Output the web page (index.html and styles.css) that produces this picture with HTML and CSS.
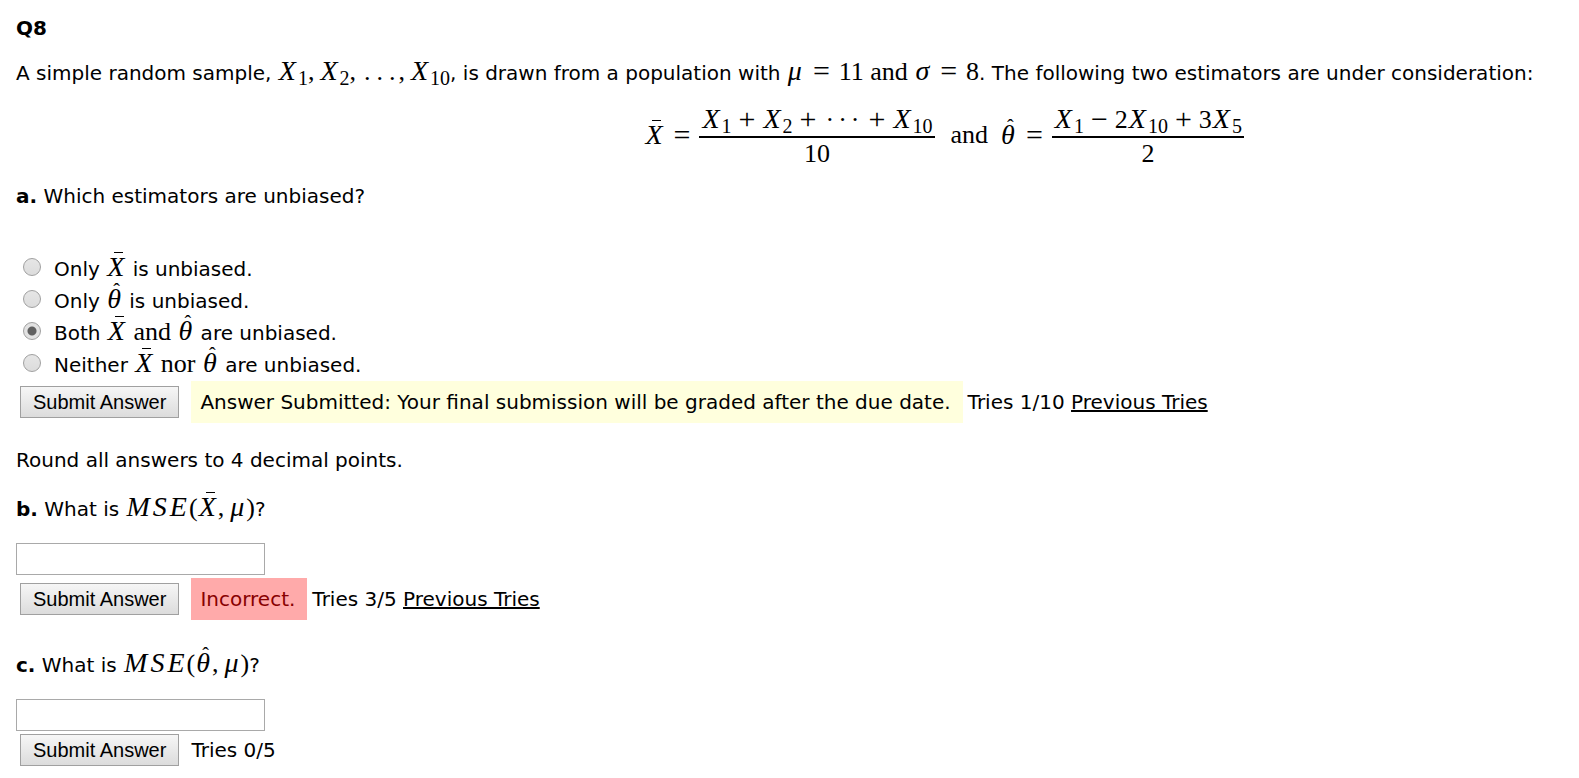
FILE: index.html
```html
<!DOCTYPE html>
<html lang="en">
<head>
  <meta charset="UTF-8" />
  <meta name="viewport" content="width=device-width, initial-scale=1.0"/>
  <title>Q8</title>
  <link rel="stylesheet" href="styles.css">
</head>
<body>
  <form class="problem">
    <h1>Q8</h1>

    <p class="intro">A simple random sample, <span class="math"><i>X</i><sub>1</sub><span class="comma">,</span><i>X</i><sub>2</sub><span class="comma">,</span><span class="dot">.</span><span class="dot">.</span><span class="dot">.</span><span class="comma">,</span><i>X</i><sub>10</sub></span>, is drawn from a population with <span class="math"><i>μ</i><span class="op">=</span>11 and <i>σ</i><span class="op">=</span>8</span>. The following two estimators are under consideration:</p>

    <div class="formula math">
      <i class="bar">X</i>
      <span class="op">=</span>
      <span class="frac">
        <span class="num"><i>X</i><sub>1</sub><span class="op">+</span><i>X</i><sub>2</sub><span class="op">+</span><span class="dot">·</span><span class="dot">·</span><span class="dot">·</span><span class="op">+</span><i>X</i><sub>10</sub></span>
        <span class="den">10</span>
      </span>
      <span class="word">and</span>
      <i class="hat">θ</i>
      <span class="op">=</span>
      <span class="frac">
        <span class="num"><i>X</i><sub>1</sub><span class="op">−</span>2<i>X</i><sub>10</sub><span class="op">+</span>3<i>X</i><sub>5</sub></span>
        <span class="den">2</span>
      </span>
    </div>

    <p class="part-a"><b>a.</b> Which estimators are unbiased?</p>

    <div class="choices">
      <label><input type="radio" name="a" value="1"><span>Only <span class="math"><i class="bar">X</i></span> is unbiased.</span></label>
      <label><input type="radio" name="a" value="2"><span>Only <span class="math"><i class="hat">θ</i></span> is unbiased.</span></label>
      <label><input type="radio" name="a" value="3" checked><span>Both <span class="math"><i class="bar">X</i> and <i class="hat">θ</i></span> are unbiased.</span></label>
      <label><input type="radio" name="a" value="4"><span>Neither <span class="math"><i class="bar">X</i> nor <i class="hat">θ</i></span> are unbiased.</span></label>
    </div>
    <div class="submit-row">
      <button type="button">Submit Answer</button>
      <span class="status submitted">Answer Submitted: Your final submission will be graded after the due date.</span>
      <span>Tries 1/10 <a href="#">Previous Tries</a></span>
    </div>

    <p class="note">Round all answers to 4 decimal points.</p>

    <p class="part-b"><label for="mse-x"><b>b.</b> What is <span class="math"><i>M</i><i>S</i><i>E</i>(<i class="bar">X</i><span class="comma">,</span><i>μ</i>)</span>?</label></p>
    <input class="answer" type="text" id="mse-x">
    <div class="submit-row">
      <button type="button">Submit Answer</button>
      <span class="status incorrect">Incorrect.</span>
      <span>Tries 3/5 <a href="#">Previous Tries</a></span>
    </div>

    <p class="part-c"><label for="mse-theta"><b>c.</b> What is <span class="math"><i>M</i><i>S</i><i>E</i>(<i class="hat">θ</i><span class="comma">,</span><i>μ</i>)</span>?</label></p>
    <input class="answer" type="text" id="mse-theta">
    <div class="submit-row">
      <button type="button">Submit Answer</button>
      <span>Tries 0/5</span>
    </div>
  </form>
</body>
</html>
```

FILE: styles.css
```css
body {
  font-family: Verdana, "DejaVu Sans", sans-serif;
  font-size: 20px;
  line-height: 32px;
  margin: 0;
  padding: 12px 16px;
  background-color: #fff;
  color: #000;
}

h1 {
  font-size: 20px;
  margin: 0;
}

p {
  margin: 0;
}

.intro {
  margin-top: 13px;
}

/* math */
.math {
  font-family: "Liberation Serif", serif;
  font-size: 26px;
  line-height: 1px;
}

.math i {
  font-size: 28px;
  padding: 0 2px 0 1px;
}

.math sub {
  font-size: 20px;
  line-height: 1px;
  vertical-align: -5px;
}

.op {
  font-size: 30px;
  line-height: 1px;
  vertical-align: -1px;
  padding: 0 9px;
}

.num .op {
  padding: 0 7px;
}

.comma {
  padding-right: 5px;
}

.dot {
  padding: 0 3px;
}

.num .dot {
  padding: 0 2px;
}

.bar,
.hat {
  position: relative;
  display: inline-block;
}

.bar::before {
  content: "";
  position: absolute;
  top: -14px;
  left: 8px;
  width: 9px;
  border-top: 1px solid #000;
}

.hat::before {
  content: "ˆ";
  position: absolute;
  top: -7px;
  left: 7px;
  font-size: 20px;
  font-style: normal;
}

.formula {
  display: flex;
  align-items: center;
  justify-content: center;
  margin-top: 10px;
  padding-left: 20%;
}

.frac {
  display: flex;
  flex-direction: column;
  text-align: center;
  line-height: 32px;
  padding-top: 4px;
}

.num {
  border-bottom: 2px solid #000;
  padding: 0 2px;
}

.word {
  padding: 0 12px 0 16px;
}

.part-a {
  margin-top: 10px;
}

.choices {
  margin-top: 41px;
}

.choices label {
  display: flex;
  height: 32px;
}

.choices input {
  appearance: none;
  width: 18px;
  height: 18px;
  margin: 5px 13px 0 7px;
  border: 1px solid #a0a0a0;
  border-radius: 50%;
  background: linear-gradient(#e6e6e6, #dcdcdc);
}

.choices input:checked {
  background: radial-gradient(circle, #606060 4px, #e2e2e2 5px);
}

.submit-row {
  display: flex;
  align-items: center;
}

button {
  font-family: Arial, "Liberation Sans", sans-serif;
  font-size: 20px;
  height: 32px;
  margin: 0 12px 0 4px;
  padding: 0 12px;
  border: 1px solid #a0a0a0;
  background: linear-gradient(#f6f6f6, #dcdcdc);
  color: #000;
}

.status {
  padding: 5px 12px 5px 9px;
  margin-right: 5px;
}

.submitted {
  background-color: #ffffdd;
}

.incorrect {
  background-color: #ffaaaa;
  color: #880000;
}

a {
  color: #000;
}

.note {
  margin-top: 21px;
}

.part-b {
  margin-top: 17px;
}

.part-c {
  margin-top: 29px;
}

.answer {
  display: block;
  box-sizing: border-box;
  width: 249px;
  height: 32px;
  margin: 18px 0 3px;
  border: 1px solid #a9a9a9;
  font-size: 20px;
}
```
